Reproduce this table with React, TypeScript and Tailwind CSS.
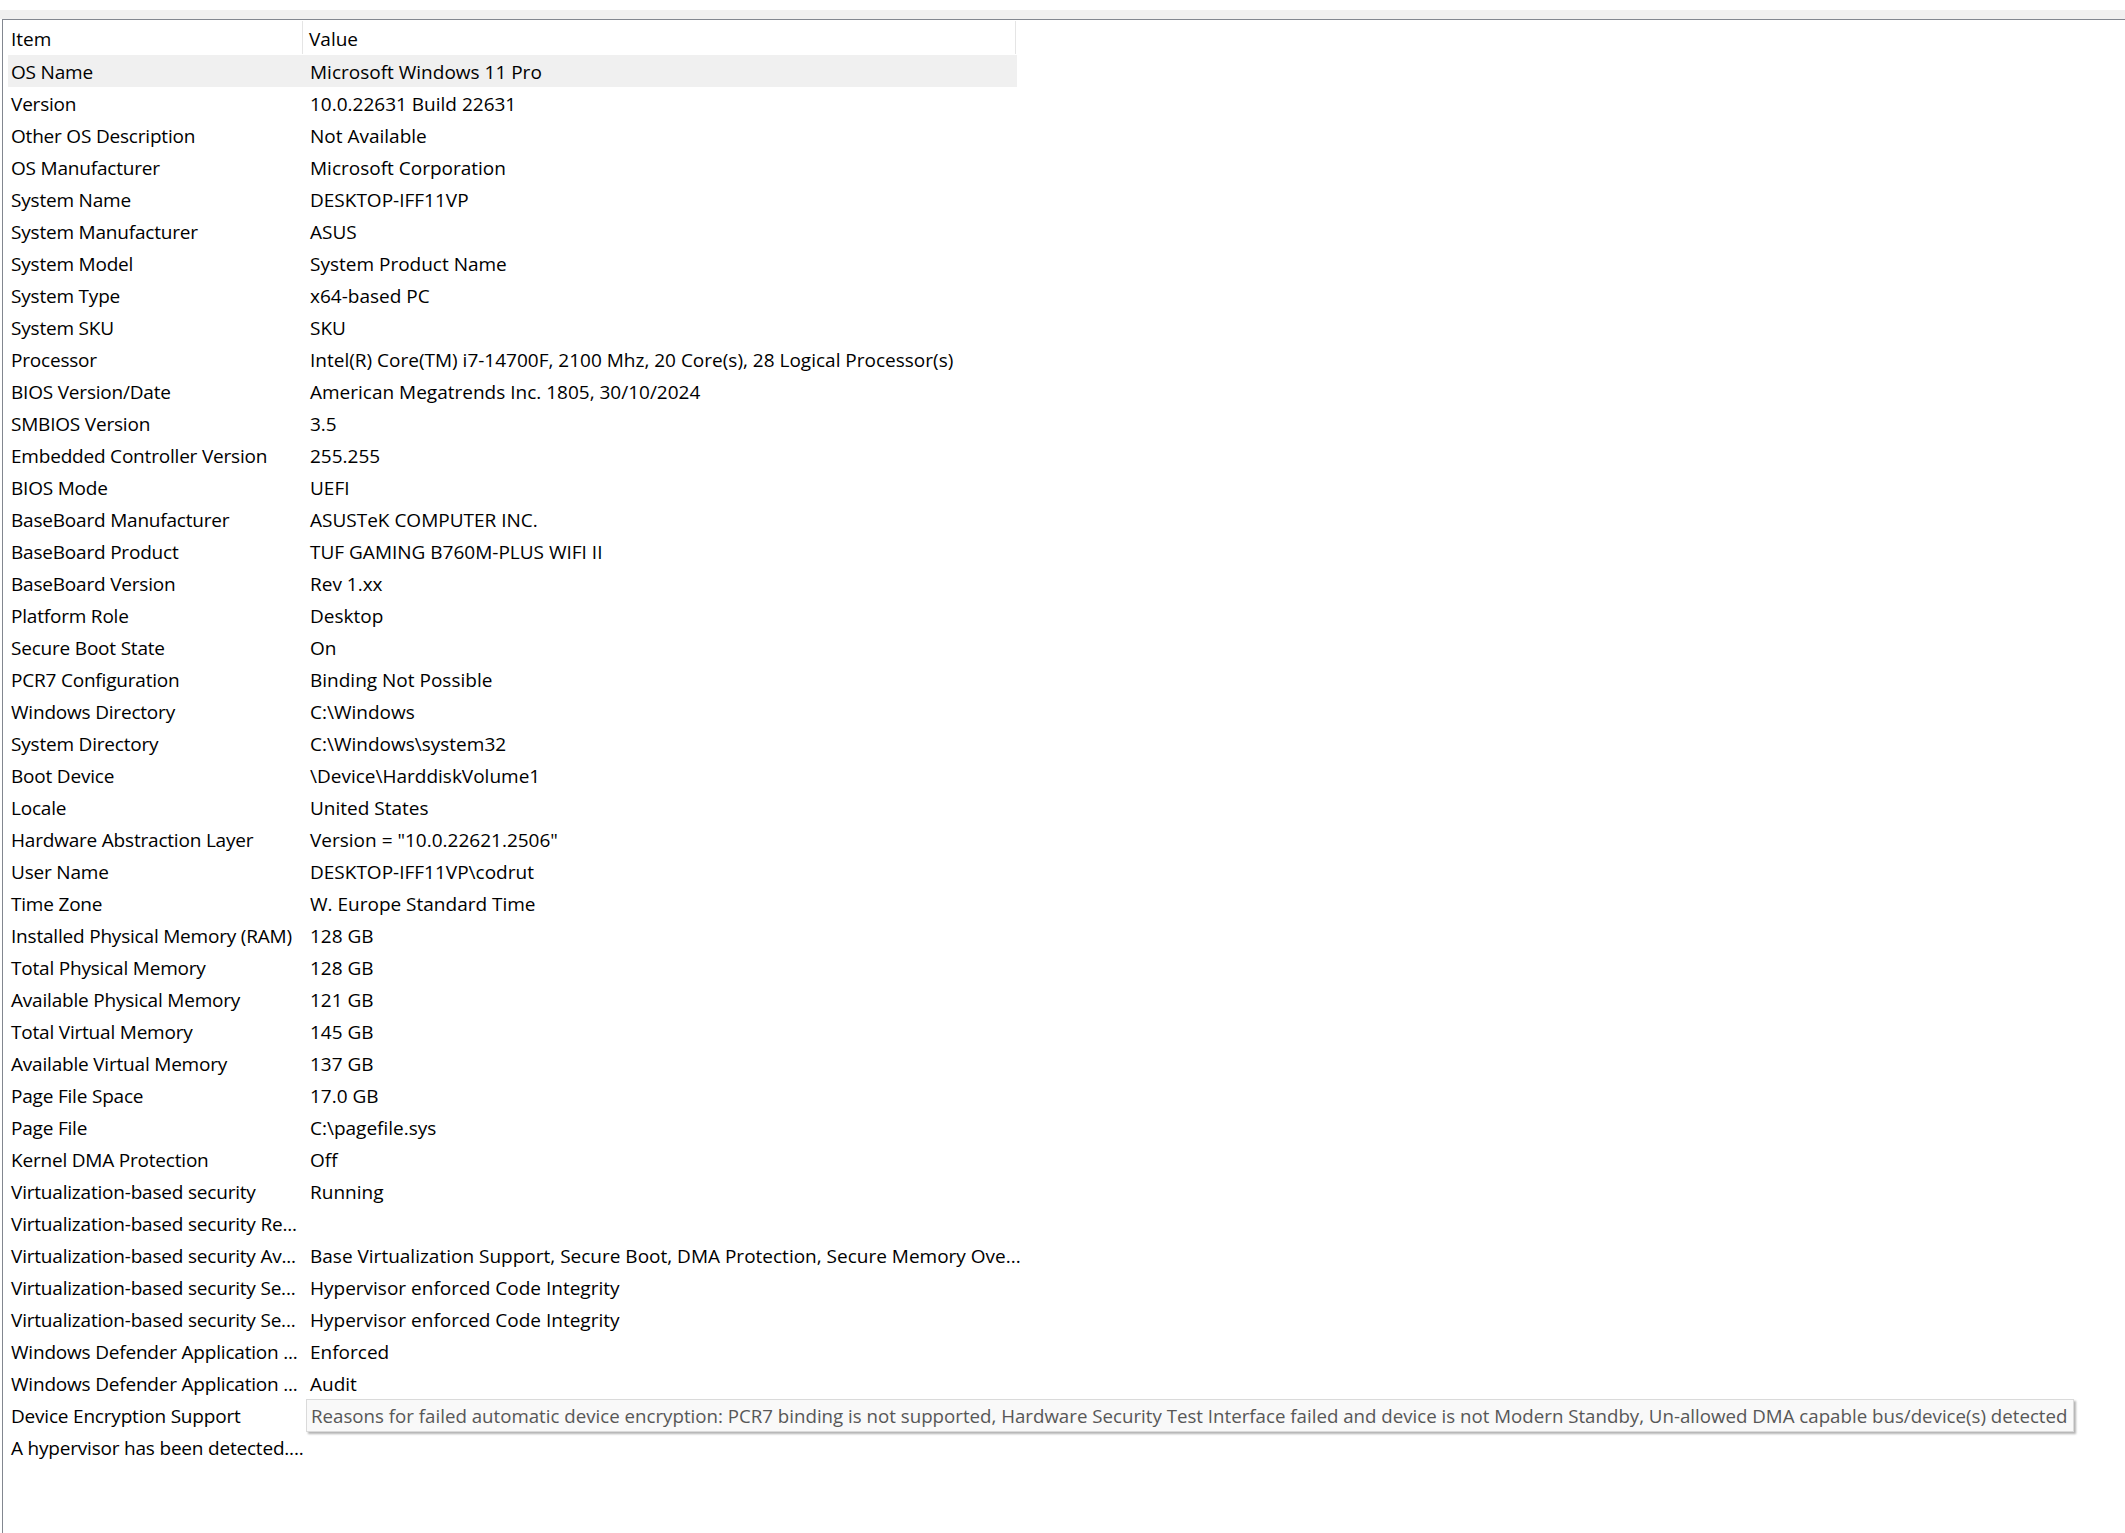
import React from 'react';

const ROWS: [string, string][] = [
  ['OS Name', 'Microsoft Windows 11 Pro'],
  ['Version', '10.0.22631 Build 22631'],
  ['Other OS Description', 'Not Available'],
  ['OS Manufacturer', 'Microsoft Corporation'],
  ['System Name', 'DESKTOP-IFF11VP'],
  ['System Manufacturer', 'ASUS'],
  ['System Model', 'System Product Name'],
  ['System Type', 'x64-based PC'],
  ['System SKU', 'SKU'],
  ['Processor', 'Intel(R) Core(TM) i7-14700F, 2100 Mhz, 20 Core(s), 28 Logical Processor(s)'],
  ['BIOS Version/Date', 'American Megatrends Inc. 1805, 30/10/2024'],
  ['SMBIOS Version', '3.5'],
  ['Embedded Controller Version', '255.255'],
  ['BIOS Mode', 'UEFI'],
  ['BaseBoard Manufacturer', 'ASUSTeK COMPUTER INC.'],
  ['BaseBoard Product', 'TUF GAMING B760M-PLUS WIFI II'],
  ['BaseBoard Version', 'Rev 1.xx'],
  ['Platform Role', 'Desktop'],
  ['Secure Boot State', 'On'],
  ['PCR7 Configuration', 'Binding Not Possible'],
  ['Windows Directory', 'C:\\Windows'],
  ['System Directory', 'C:\\Windows\\system32'],
  ['Boot Device', '\\Device\\HarddiskVolume1'],
  ['Locale', 'United States'],
  ['Hardware Abstraction Layer', 'Version = "10.0.22621.2506"'],
  ['User Name', 'DESKTOP-IFF11VP\\codrut'],
  ['Time Zone', 'W. Europe Standard Time'],
  ['Installed Physical Memory (RAM)', '128 GB'],
  ['Total Physical Memory', '128 GB'],
  ['Available Physical Memory', '121 GB'],
  ['Total Virtual Memory', '145 GB'],
  ['Available Virtual Memory', '137 GB'],
  ['Page File Space', '17.0 GB'],
  ['Page File', 'C:\\pagefile.sys'],
  ['Kernel DMA Protection', 'Off'],
  ['Virtualization-based security', 'Running'],
  ['Virtualization-based security Re...', ''],
  ['Virtualization-based security Av...', 'Base Virtualization Support, Secure Boot, DMA Protection, Secure Memory Ove...'],
  ['Virtualization-based security Se...', 'Hypervisor enforced Code Integrity'],
  ['Virtualization-based security Se...', 'Hypervisor enforced Code Integrity'],
  ['Windows Defender Application ...', 'Enforced'],
  ['Windows Defender Application ...', 'Audit'],
  ['Device Encryption Support', ''],
  ['A hypervisor has been detected....', ''],
];

const TIP =
  'Reasons for failed automatic device encryption: PCR7 binding is not supported, Hardware Security Test Interface failed and device is not Modern Standby, Un-allowed DMA capable bus/device(s) detected';

export default function App() {
  return (
    <div className="w-[2125px] h-[1533px] bg-white overflow-hidden text-[19px] text-black font-['Open_Sans',sans-serif]">
      <div className="h-[10px]" />
      <div className="h-[9px] bg-[#f0f0f0]" />
      <div className="h-[1514px] border-t border-l border-[#828790] ml-[2px] flex flex-col">
        <div className="w-[1014px] flex h-[35px] items-center">
          <div className="w-[300px] h-[33px] flex items-center pl-[8px] pt-[4px] border-r border-[#e5e5e5]">Item</div>
          <div className="w-[713px] h-[33px] flex items-center pl-[6px] pt-[4px] border-r border-[#e5e5e5]">Value</div>
        </div>
        <div className="relative flex flex-col">
          {ROWS.map(([k, v], i) => (
            <div
              key={i}
              className={`flex h-[32px] pt-[2px] items-center ml-[5px] w-[1009px] ${i === 0 ? 'bg-[#f0f0f0]' : ''}`}
            >
              <div className="w-[296px] shrink-0 pl-[3px] whitespace-nowrap tracking-[-0.2px]">{k}</div>
              <div className="pl-[6px] whitespace-nowrap">{v}</div>
            </div>
          ))}
          <div className="absolute left-[303px] top-[1344px] h-[33px] pl-[4px] pr-[6px] pt-[2px] flex items-center whitespace-nowrap bg-[#f9f9f9] border border-[#dadada] text-[18.7px] text-[#575757] shadow-[2px_2px_2px_rgba(0,0,0,0.3)]">
            {TIP}
          </div>
        </div>
      </div>
    </div>
  );
}
